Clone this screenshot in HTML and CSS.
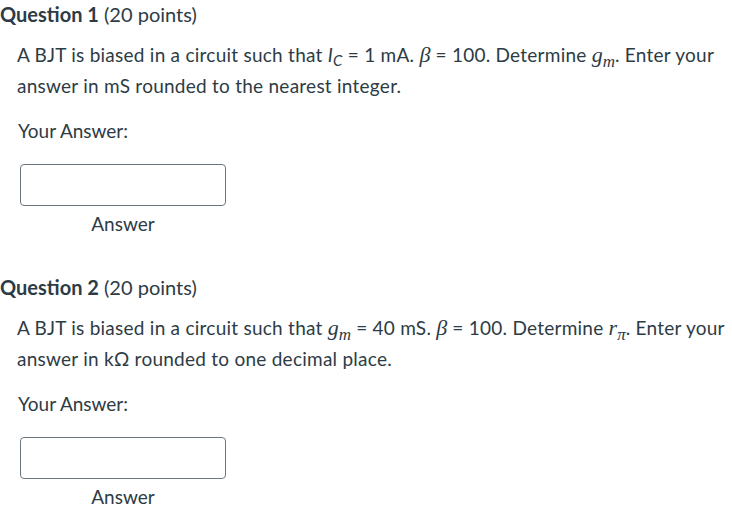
FILE: index.html
```html
<!DOCTYPE html>
<html>
<head>
<meta charset="utf-8">
<link rel="stylesheet" href="styles.css">
</head>
<body>
<div class="question">
  <h2 class="q-title"><strong>Question 1</strong> (20 points)</h2>
  <div class="q-body">
    <p class="q-text">A BJT is biased in a circuit such that <span class="mi-sans">I</span><sub class="sub-sans">C</sub> = 1 mA. <span class="mi">β</span> = 100. Determine <span class="mi">g</span><sub class="mi-sub">m</sub>. Enter your answer in mS rounded to the nearest integer.</p>
    <p class="your">Your Answer:</p>
    <div class="answer-wrap">
      <input class="answer-box" type="text">
      <div class="answer-label">Answer</div>
    </div>
  </div>
</div>
<div class="question q2">
  <h2 class="q-title"><strong>Question 2</strong> (20 points)</h2>
  <div class="q-body">
    <p class="q-text">A BJT is biased in a circuit such that <span class="mi">g</span><sub class="mi-sub">m</sub> = 40 mS. <span class="mi">β</span> = 100. Determine <span class="mi">r</span><sub class="mi-sub">π</sub>. Enter your answer in kΩ rounded to one decimal place.</p>
    <p class="your">Your Answer:</p>
    <div class="answer-wrap">
      <input class="answer-box" type="text">
      <div class="answer-label">Answer</div>
    </div>
  </div>
</div>
</body>
</html>
```
FILE: styles.css
```css
html, body {
  margin: 0;
  padding: 0;
  background: #ffffff;
}
body {
  font-family: Lato, "Liberation Sans", sans-serif;
  color: #2d3b45;
  font-size: 19px;
}
.question {
  height: 273px;
  overflow: hidden;
}
.q-title {
  margin: 0;
  padding-top: 2px;
  font-size: 20px;
  font-weight: normal;
  line-height: 24px;
}
.q-title strong {
  font-weight: 700;
}
.q-body {
  padding-left: 17px;
}
.q-text {
  margin: 13px 0 0 0;
  line-height: 31px;
  width: 712px;
  letter-spacing: 0.25px;
}
.mi, .mi-sub {
  font-family: "Liberation Serif", "DejaVu Serif", serif;
  font-style: italic;
  letter-spacing: 0;
}
.mi {
  font-size: 22px;
  line-height: 0;
}
.mi-sub {
  font-size: 17px;
  vertical-align: -5px;
  line-height: 0;
}
.mi-sans {
  font-style: italic;
}
.sub-sans {
  font-style: italic;
  font-size: 15px;
  vertical-align: -4px;
  line-height: 0;
}
.your {
  margin: 18px 0 0 1px;
  line-height: 24px;
}
.answer-wrap {
  margin-top: 21px;
  width: 206px;
  margin-left: 3px;
}
.answer-box {
  display: block;
  box-sizing: border-box;
  width: 206px;
  height: 42px;
  border: 1px solid #6b7780;
  border-radius: 4px;
  margin: 0;
  padding: 0 8px;
  background: #fff;
}
.answer-label {
  text-align: center;
  line-height: 24px;
  margin-top: 6px;
}
```
